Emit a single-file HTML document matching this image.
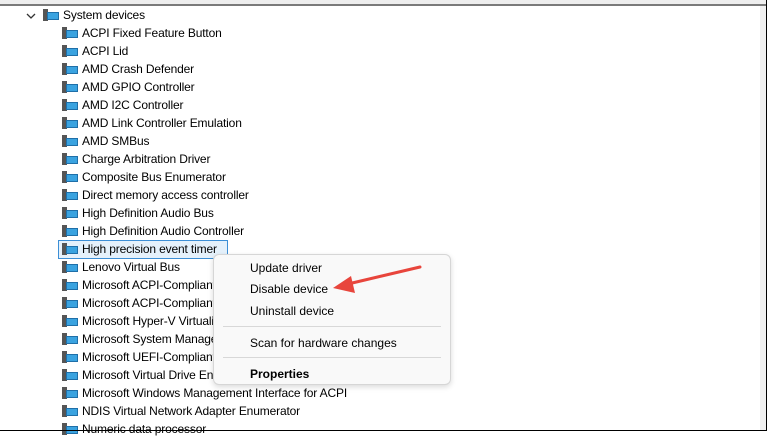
<!DOCTYPE html>
<html><head><style>
body{margin:0;width:767px;height:431px;overflow:hidden;background:#fff;font-family:"Liberation Sans",sans-serif;font-size:12px;color:#000;position:relative}
.frame{position:absolute;left:0;top:0;width:767px;height:431px;border-right:1px solid #000;border-bottom:1px solid #000;box-sizing:border-box}
.top{position:absolute;left:0;top:0;width:767px;height:4px;background:#eee;border-bottom:2px solid #7a7a7a}
.sb{position:absolute;right:1px;top:6px;width:6px;height:424px;background:#f0f0f0}
.row{position:absolute;height:18px;line-height:18px;white-space:nowrap}
.ic{position:absolute;width:16px;height:14px;top:2px}
.ic i{position:absolute;left:0;top:1px;width:5px;height:12px;background:#555}
.ic b{position:absolute;left:4px;top:4px;width:12px;height:8px;background:#3aa3e0;border:1px solid #1f6fa8;box-sizing:border-box}
.t{position:absolute;left:20px;letter-spacing:-0.15px}
.sel{position:absolute;left:58px;top:240px;width:168px;height:17px;border:1px solid #3d8fd6;background:#e5f1fb}
.menu{position:absolute;left:213px;top:254px;width:238px;height:131px;background:#f9f9f9;border:1px solid #d6d6d6;border-radius:6px;box-shadow:0 2px 6px rgba(0,0,0,.15);box-sizing:border-box}
.mi{position:absolute;left:36px;font-size:12px}
.sep{position:absolute;left:9px;right:9px;height:1px;background:#d8d8d8}
</style></head><body>
<div class="top"></div>
<div class="sb"></div>
<div class="sel"></div>
<div class="row" style="left:26px;top:6px"><svg width="10" height="10" style="position:absolute;left:0;top:5px"><path d="M1 3 L5 7 L9 3" stroke="#333" fill="none" stroke-width="1.3"/></svg><div class="ic" style="left:17px"><i></i><b></b></div><span class="t" style="left:37px">System devices</span></div>
<div id="list"></div>
<div class="menu">
<div class="mi" style="top:6px">Update driver</div>
<div class="mi" style="top:27px">Disable device</div>
<div class="mi" style="top:49px">Uninstall device</div>
<div class="sep" style="top:71px"></div>
<div class="mi" style="top:81px">Scan for hardware changes</div>
<div class="sep" style="top:102px"></div>
<div class="mi" style="top:112px;font-weight:bold">Properties</div>
</div>
<svg style="position:absolute;left:0;top:0" width="767" height="431"><path d="M420 267 L348 284" stroke="#e8453c" stroke-width="3" stroke-linecap="round"/><path d="M333 288 L351 276 L355 293 Z" fill="#e8453c"/></svg>
<div class="frame"></div>
<script>
var n=["ACPI Fixed Feature Button","ACPI Lid","AMD Crash Defender","AMD GPIO Controller","AMD I2C Controller","AMD Link Controller Emulation","AMD SMBus","Charge Arbitration Driver","Composite Bus Enumerator","Direct memory access controller","High Definition Audio Bus","High Definition Audio Controller","High precision event timer","Lenovo Virtual Bus","Microsoft ACPI-Compliant System","Microsoft ACPI-Compliant Embedded Controller","Microsoft Hyper-V Virtualization","Microsoft System Management BIOS","Microsoft UEFI-Compliant System","Microsoft Virtual Drive Enumerator","Microsoft Windows Management Interface for ACPI","NDIS Virtual Network Adapter Enumerator","Numeric data processor"];
var h="";n.forEach(function(s,i){h+='<div class="row" style="left:62px;top:'+(24+i*18)+'px"><div class="ic" style="left:0"><i></i><b></b></div><span class="t">'+s+'</span></div>';});
document.getElementById("list").innerHTML=h;
</script>
</body></html>
